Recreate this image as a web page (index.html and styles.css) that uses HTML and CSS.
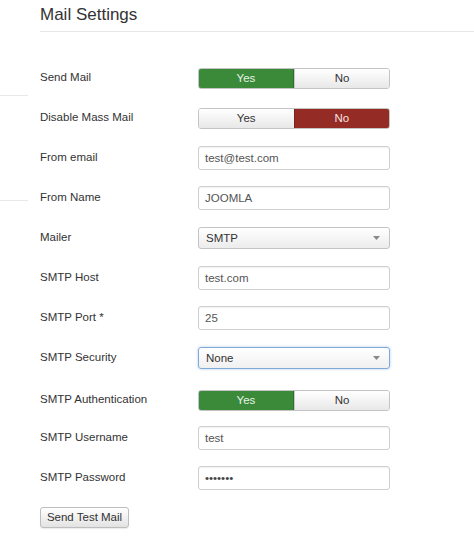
FILE: index.html
```html
<!DOCTYPE html>
<html>
<head>
<meta charset="utf-8">
<link rel="stylesheet" href="styles.css">
</head>
<body>
<div class="page">
  <aside class="sidebar">
    <div class="side-line side-line-1"></div>
    <div class="side-line side-line-2"></div>
  </aside>
  <main class="main">
    <h1 class="title">Mail Settings</h1>
    <div class="form">
      <div class="row">
        <div class="label">Send Mail</div>
        <div class="toggle"><span class="opt on-yes">Yes</span><span class="opt">No</span></div>
      </div>
      <div class="row">
        <div class="label">Disable Mass Mail</div>
        <div class="toggle"><span class="opt">Yes</span><span class="opt on-no">No</span></div>
      </div>
      <div class="row">
        <div class="label">From email</div>
        <div class="input">test@test.com</div>
      </div>
      <div class="row">
        <div class="label">From Name</div>
        <div class="input">JOOMLA</div>
      </div>
      <div class="row">
        <div class="label">Mailer</div>
        <div class="select"><span>SMTP</span><svg class="caret" width="7" height="4" viewBox="0 0 7 4"><path d="M0 0H7L3.5 4Z" fill="#888"/></svg></div>
      </div>
      <div class="row">
        <div class="label">SMTP Host</div>
        <div class="input">test.com</div>
      </div>
      <div class="row">
        <div class="label">SMTP Port *</div>
        <div class="input">25</div>
      </div>
      <div class="row">
        <div class="label">SMTP Security</div>
        <div class="select focus"><span>None</span><svg class="caret" width="7" height="4" viewBox="0 0 7 4"><path d="M0 0H7L3.5 4Z" fill="#888"/></svg></div>
      </div>
      <div class="row row-auth">
        <div class="label">SMTP Authentication</div>
        <div class="toggle"><span class="opt on-yes">Yes</span><span class="opt">No</span></div>
      </div>
      <div class="row">
        <div class="label">SMTP Username</div>
        <div class="input">test</div>
      </div>
      <div class="row">
        <div class="label">SMTP Password</div>
        <div class="input pw">•••••••</div>
      </div>
      <div class="row">
        <button class="btn">Send Test Mail</button>
      </div>
    </div>
  </main>
</div>
</body>
</html>
```

FILE: styles.css
```css
html, body {
  margin: 0;
  padding: 0;
  background: #fff;
}
body {
  font-family: "Liberation Sans", Arial, sans-serif;
  color: #333;
  font-size: 11.5px;
}
.page {
  display: flex;
  width: 474px;
  height: 544px;
  overflow: hidden;
}
.sidebar {
  width: 28px;
  flex: none;
  margin-right: 12px;
}
.side-line {
  height: 1px;
  background: #e8e8e8;
}
.side-line-1 {
  margin-top: 95px;
}
.side-line-2 {
  margin-top: 104px;
}
.main {
  flex: 1;
}
.title {
  margin: 5px 0 0 0;
  font-size: 17px;
  line-height: 20px;
  font-weight: normal;
  color: #333;
  padding-bottom: 6px;
  border-bottom: 1px solid #e6e6e6;
}
.form {
  padding-top: 26px;
}
.row {
  display: flex;
  align-items: center;
  height: 40px;
}
.row-auth {
  margin-top: 2px;
  margin-bottom: -2px;
}
.label {
  width: 158px;
  flex: none;
  line-height: 14px;
  margin-top: -2px;
}
.toggle {
  display: flex;
  width: 192px;
  height: 21px;
  box-sizing: border-box;
  border: 1px solid #c4c4c4;
  border-radius: 3px;
  overflow: hidden;
}
.opt {
  flex: 1;
  display: flex;
  align-items: center;
  justify-content: center;
  background: linear-gradient(#ffffff, #e8e8e8);
  color: #333;
  font-size: 11.5px;
}
.opt + .opt {
  border-left: 1px solid #c8c8c8;
}
.opt.on-yes {
  background: #3a8a3a;
  color: #e8f2e8;
  margin: -1px 0 -1px -1px;
  border: 1px solid #2e6f2e;
  border-radius: 3px 0 0 3px;
}
.opt.on-no {
  background: #952b25;
  color: #f5e3e2;
  margin: -1px -1px -1px 0;
  border: 1px solid #7d221d;
  border-radius: 0 3px 3px 0;
}
.input {
  width: 192px;
  height: 24px;
  box-sizing: border-box;
  border: 1px solid #cfcfcf;
  border-radius: 3px;
  padding: 0 6px;
  display: flex;
  align-items: center;
  color: #555;
  box-shadow: inset 0 1px 1px rgba(0,0,0,0.06);
}
.input.pw {
  color: #444;
}
.select {
  width: 192px;
  height: 22px;
  box-sizing: border-box;
  border: 1px solid #c4c4c4;
  border-radius: 3px;
  padding: 0 9px 0 7px;
  display: flex;
  align-items: center;
  justify-content: space-between;
  background: linear-gradient(#ffffff, #ececec);
  color: #333;
}
.select.focus {
  border-color: #7fa9d6;
  box-shadow: 0 0 3px rgba(82,140,210,0.45);
  background: linear-gradient(#ffffff, #f0f0f0);
}
.caret {
  display: block;
}
.btn {
  font-family: "Liberation Sans", Arial, sans-serif;
  font-size: 11.5px;
  color: #333;
  width: 89px;
  height: 21px;
  padding: 0;
  margin-top: -2px;
  border: 1px solid #bdbdbd;
  border-radius: 3px;
  background: linear-gradient(#ffffff, #e3e3e3);
  box-shadow: 0 1px 1px rgba(0,0,0,0.08);
}
```
